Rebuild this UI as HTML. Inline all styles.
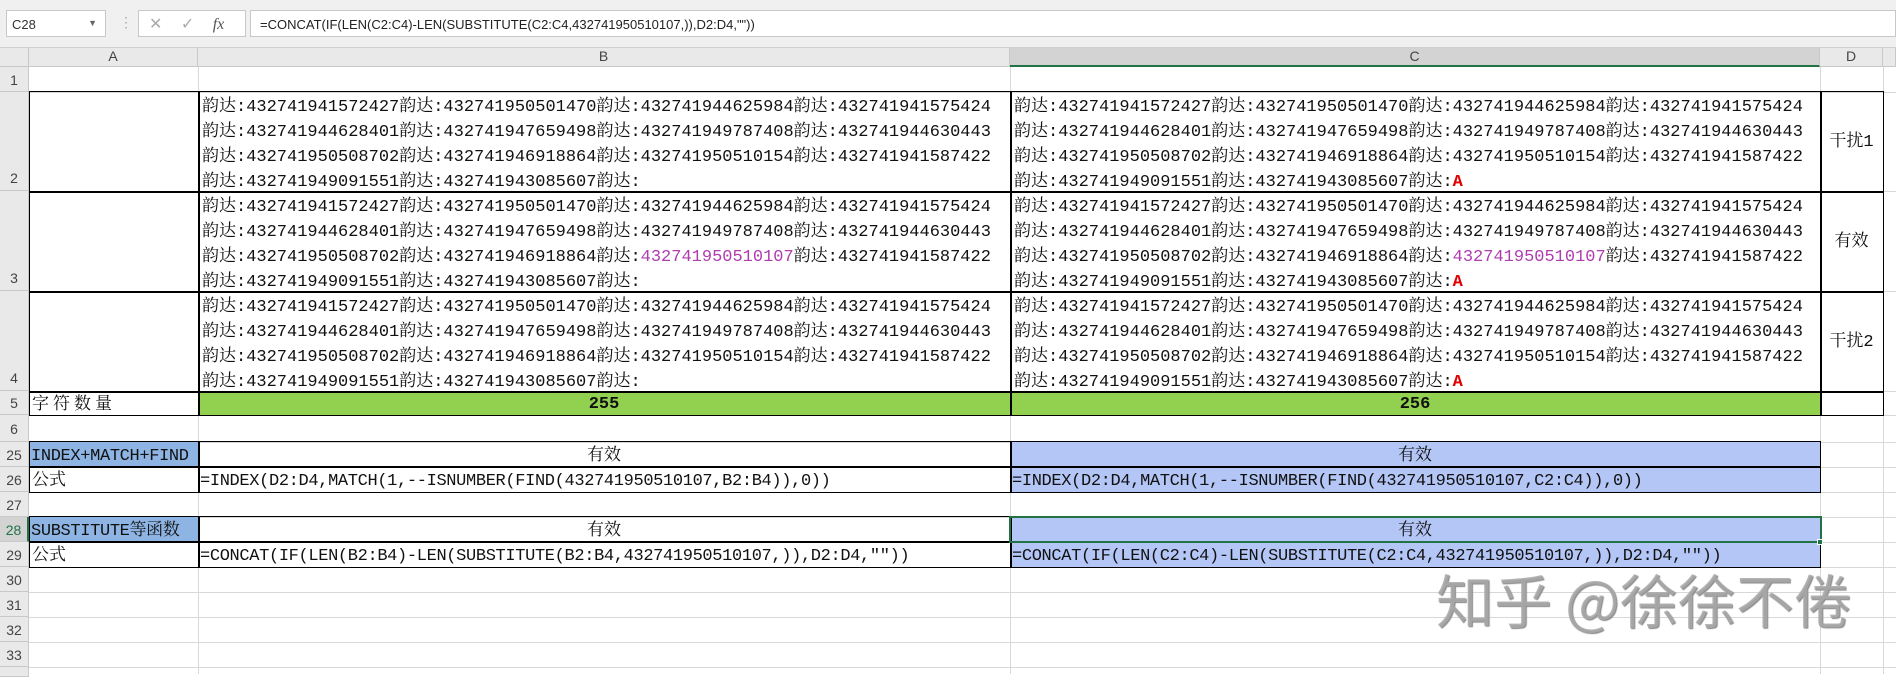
<!DOCTYPE html><html><head><meta charset="utf-8"><style>
*{margin:0;padding:0;box-sizing:border-box}
body{width:1896px;height:674px;overflow:hidden;background:#fff;position:relative;font-family:"Liberation Mono","Noto Serif CJK SC",monospace}
.a{position:absolute}
.top{left:0;top:0;width:1896px;height:48px;background:#f0f0f0;border-bottom:1px solid #d0d0d0}
.box{background:#fff;border:1px solid #c8c8c8}
.hd{background:#e9e9e9;color:#444;font-family:"Liberation Sans",sans-serif;font-size:14px;text-align:center;border-right:1px solid #c8c8c8;border-bottom:1px solid #c8c8c8}
.rh{background:#e9e9e9;color:#444;font-family:"Liberation Sans",sans-serif;font-size:14px;text-align:center;border-bottom:1px solid #c8c8c8;border-right:1px solid #c8c8c8}
.hl{position:absolute;left:29px;width:1867px;height:1px;background:#d8d8d8}
.vl{position:absolute;top:67px;height:607px;width:1px;background:#d8d8d8}
.t{position:absolute;font-size:17px;letter-spacing:0px;line-height:25px;white-space:nowrap;color:#111}
.p{color:#b03cb0}.r{color:#e00000;font-weight:bold}
.c{text-align:center}
.f{letter-spacing:-0.35px !important}
</style></head><body>
<div class="a top"></div>
<div class="a box" style="left:6px;top:10px;width:100px;height:27px;font:13px 'Liberation Sans',sans-serif;padding:6px 5px;color:#333">C28<span style="position:absolute;right:8px;top:7px;font-size:9px;color:#666">▼</span></div>
<div class="a" style="left:119px;top:14px;color:#aaa;font:14px 'Liberation Sans'">⋮</div>
<div class="a box" style="left:138px;top:10px;width:108px;height:27px;color:#aaa;font:16px 'Liberation Sans',sans-serif;padding:3px 10px;word-spacing:14px">✕ ✓ <i style="font-family:'Liberation Serif';color:#555">fx</i></div>
<div class="a box" style="left:250px;top:10px;width:1646px;height:27px;font:13px 'Liberation Sans',sans-serif;padding:6px 9px;color:#222">=CONCAT(IF(LEN(C2:C4)-LEN(SUBSTITUTE(C2:C4,432741950510107,)),D2:D4,""))</div>
<div class="a hd" style="left:0;top:48px;width:29px;height:19px;background:#e9e9e9"></div>
<div class="a hd" style="left:29px;top:48px;width:169px;height:19px">A</div>
<div class="a hd" style="left:198px;top:48px;width:812px;height:19px">B</div>
<div class="a hd" style="left:1010px;top:48px;width:810px;height:19px;background:#d3d3d3;border-bottom:2px solid #217346">C</div>
<div class="a hd" style="left:1820px;top:48px;width:63px;height:19px">D</div>
<div class="a hd" style="left:1883px;top:48px;width:13px;height:19px"></div>
<div class="vl" style="left:198px"></div><div class="vl" style="left:1010px"></div><div class="vl" style="left:1820px"></div><div class="vl" style="left:1883px"></div>
<div class="hl" style="top:92px"></div><div class="hl" style="top:191px"></div><div class="hl" style="top:291px"></div><div class="hl" style="top:391px"></div><div class="hl" style="top:415px"></div><div class="hl" style="top:442px"></div><div class="hl" style="top:467px"></div><div class="hl" style="top:492px"></div><div class="hl" style="top:517px"></div><div class="hl" style="top:542px"></div><div class="hl" style="top:567px"></div><div class="hl" style="top:592px"></div><div class="hl" style="top:617px"></div><div class="hl" style="top:642px"></div><div class="hl" style="top:667px"></div>
<div class="a rh" style="left:0;top:67px;width:29px;height:25px;padding-top:5px">1</div>
<div class="a rh" style="left:0;top:92px;width:29px;height:99px;padding-top:78px">2</div>
<div class="a rh" style="left:0;top:191px;width:29px;height:100px;padding-top:79px">3</div>
<div class="a rh" style="left:0;top:291px;width:29px;height:100px;padding-top:79px">4</div>
<div class="a rh" style="left:0;top:391px;width:29px;height:24px;padding-top:4px">5</div>
<div class="a rh" style="left:0;top:415px;width:29px;height:27px;padding-top:6px">6</div>
<div class="a rh" style="left:0;top:442px;width:29px;height:25px;padding-top:5px">25</div>
<div class="a rh" style="left:0;top:467px;width:29px;height:25px;padding-top:5px">26</div>
<div class="a rh" style="left:0;top:492px;width:29px;height:25px;padding-top:5px">27</div>
<div class="a rh" style="left:0;top:517px;width:29px;height:25px;padding-top:5px;background:#d3d3d3;color:#217346;border-right:2px solid #217346">28</div>
<div class="a rh" style="left:0;top:542px;width:29px;height:25px;padding-top:5px">29</div>
<div class="a rh" style="left:0;top:567px;width:29px;height:25px;padding-top:5px">30</div>
<div class="a rh" style="left:0;top:592px;width:29px;height:25px;padding-top:5px">31</div>
<div class="a rh" style="left:0;top:617px;width:29px;height:25px;padding-top:5px">32</div>
<div class="a rh" style="left:0;top:642px;width:29px;height:25px;padding-top:5px">33</div>
<div class="a rh" style="left:0;top:667px;width:29px;height:10px"></div>
<div class="a" style="left:198px;top:391px;width:1622px;height:24px;background:#92d050"></div>
<div class="a" style="left:29px;top:442px;width:169px;height:25px;background:#8db4e2"></div>
<div class="a" style="left:29px;top:517px;width:169px;height:25px;background:#8db4e2"></div>
<div class="a" style="left:1010px;top:442px;width:810px;height:50px;background:#b4c6f6"></div>
<div class="a" style="left:1010px;top:517px;width:810px;height:50px;background:#b4c6f6"></div>
<div class="a" style="left:29px;top:91px;width:1855px;height:325px;border:1.5px solid #000"></div>
<div class="a" style="left:29px;top:191px;width:1855px;height:1.5px;background:#000"></div>
<div class="a" style="left:29px;top:291px;width:1855px;height:1.5px;background:#000"></div>
<div class="a" style="left:29px;top:391px;width:1855px;height:1.5px;background:#000"></div>
<div class="a" style="left:198px;top:92px;width:1.5px;height:323px;background:#000"></div>
<div class="a" style="left:1010px;top:92px;width:1.5px;height:323px;background:#000"></div>
<div class="a" style="left:1820px;top:92px;width:1.5px;height:323px;background:#000"></div>
<div class="a" style="left:29px;top:441px;width:1792px;height:52px;border:1.5px solid #000"></div>
<div class="a" style="left:29px;top:466px;width:1792px;height:1.5px;background:#000"></div>
<div class="a" style="left:198px;top:442px;width:1.5px;height:50px;background:#000"></div>
<div class="a" style="left:1010px;top:442px;width:1.5px;height:50px;background:#000"></div>
<div class="a" style="left:29px;top:516px;width:1792px;height:52px;border:1.5px solid #000"></div>
<div class="a" style="left:29px;top:541px;width:1792px;height:1.5px;background:#000"></div>
<div class="a" style="left:198px;top:517px;width:1.5px;height:50px;background:#000"></div>
<div class="a" style="left:1010px;top:517px;width:1.5px;height:50px;background:#000"></div>
<div class="a" style="left:1009px;top:516px;width:813px;height:27px;border:2px solid #217346"></div>
<div class="a" style="left:1817px;top:539px;width:6px;height:6px;background:#217346;border:1px solid #fff"></div>
<div class="t" style="left:202px;top:95px">韵达:432741941572427韵达:432741950501470韵达:432741944625984韵达:432741941575424<br>韵达:432741944628401韵达:432741947659498韵达:432741949787408韵达:432741944630443<br>韵达:432741950508702韵达:432741946918864韵达:432741950510154韵达:432741941587422<br>韵达:432741949091551韵达:432741943085607韵达:</div>
<div class="t" style="left:1014px;top:95px">韵达:432741941572427韵达:432741950501470韵达:432741944625984韵达:432741941575424<br>韵达:432741944628401韵达:432741947659498韵达:432741949787408韵达:432741944630443<br>韵达:432741950508702韵达:432741946918864韵达:432741950510154韵达:432741941587422<br>韵达:432741949091551韵达:432741943085607韵达:<span class="r">A</span></div>
<div class="t" style="left:202px;top:195px">韵达:432741941572427韵达:432741950501470韵达:432741944625984韵达:432741941575424<br>韵达:432741944628401韵达:432741947659498韵达:432741949787408韵达:432741944630443<br>韵达:432741950508702韵达:432741946918864韵达:<span class="p">432741950510107</span>韵达:432741941587422<br>韵达:432741949091551韵达:432741943085607韵达:</div>
<div class="t" style="left:1014px;top:195px">韵达:432741941572427韵达:432741950501470韵达:432741944625984韵达:432741941575424<br>韵达:432741944628401韵达:432741947659498韵达:432741949787408韵达:432741944630443<br>韵达:432741950508702韵达:432741946918864韵达:<span class="p">432741950510107</span>韵达:432741941587422<br>韵达:432741949091551韵达:432741943085607韵达:<span class="r">A</span></div>
<div class="t" style="left:202px;top:295px">韵达:432741941572427韵达:432741950501470韵达:432741944625984韵达:432741941575424<br>韵达:432741944628401韵达:432741947659498韵达:432741949787408韵达:432741944630443<br>韵达:432741950508702韵达:432741946918864韵达:432741950510154韵达:432741941587422<br>韵达:432741949091551韵达:432741943085607韵达:</div>
<div class="t" style="left:1014px;top:295px">韵达:432741941572427韵达:432741950501470韵达:432741944625984韵达:432741941575424<br>韵达:432741944628401韵达:432741947659498韵达:432741949787408韵达:432741944630443<br>韵达:432741950508702韵达:432741946918864韵达:432741950510154韵达:432741941587422<br>韵达:432741949091551韵达:432741943085607韵达:<span class="r">A</span></div>
<div class="t c" style="left:1820px;top:130px;width:63px">干扰1</div>
<div class="t c" style="left:1820px;top:230px;width:63px">有效</div>
<div class="t c" style="left:1820px;top:330px;width:63px">干扰2</div>
<div class="t" style="left:32px;top:393px;letter-spacing:4px">字符数量</div>
<div class="t c" style="left:198px;top:392px;width:812px;font-weight:bold">255</div>
<div class="t c" style="left:1010px;top:392px;width:810px;font-weight:bold">256</div>
<div class="t f" style="left:31px;top:444px">INDEX+MATCH+FIND</div>
<div class="t c" style="left:198px;top:444px;width:812px">有效</div>
<div class="t c" style="left:1010px;top:444px;width:810px">有效</div>
<div class="t" style="left:32px;top:469px">公式</div>
<div class="t f" style="left:200px;top:469px">=INDEX(D2:D4,MATCH(1,--ISNUMBER(FIND(432741950510107,B2:B4)),0))</div>
<div class="t f" style="left:1012px;top:469px">=INDEX(D2:D4,MATCH(1,--ISNUMBER(FIND(432741950510107,C2:C4)),0))</div>
<div class="t f" style="left:31px;top:519px">SUBSTITUTE等函数</div>
<div class="t c" style="left:198px;top:519px;width:812px">有效</div>
<div class="t c" style="left:1010px;top:519px;width:810px">有效</div>
<div class="t" style="left:32px;top:544px">公式</div>
<div class="t f" style="left:200px;top:544px">=CONCAT(IF(LEN(B2:B4)-LEN(SUBSTITUTE(B2:B4,432741950510107,)),D2:D4,""))</div>
<div class="t f" style="left:1012px;top:544px">=CONCAT(IF(LEN(C2:C4)-LEN(SUBSTITUTE(C2:C4,432741950510107,)),D2:D4,""))</div>
<div class="a" style="left:1436px;top:568px;font:58px 'Noto Sans CJK SC',sans-serif;color:rgba(170,170,170,0.85);white-space:nowrap;line-height:60px;text-shadow:1px 1px 1px #888">知乎 @徐徐不倦</div>
</body></html>
